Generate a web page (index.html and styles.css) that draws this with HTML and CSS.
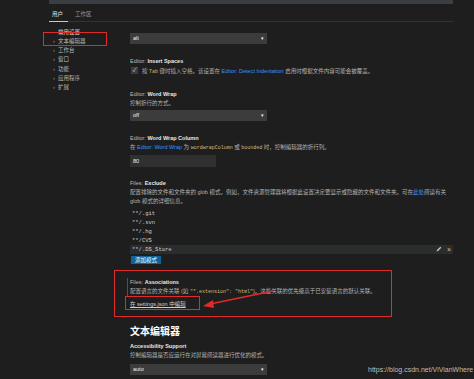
FILE: index.html
```html
<!DOCTYPE html>
<html lang="zh-CN">
<head>
    <meta charset="UTF-8">
    <title>设置</title>
    <link rel="stylesheet" href="styles.css">
</head>
<body>
    <div class="page">
        <div class="search"></div>
        <div class="tabs">
            <span class="tab active">用户</span>
            <span class="tab">工作区</span>
        </div>
        <div class="main">
            <ul class="toc">
                <li class="toc-top">常用设置</li>
                <li><span class="chev">›</span>文本编辑器</li>
                <li><span class="chev">›</span>工作台</li>
                <li><span class="chev">›</span>窗口</li>
                <li><span class="chev">›</span>功能</li>
                <li><span class="chev">›</span>应用程序</li>
                <li><span class="chev">›</span>扩展</li>
            </ul>

            <div class="content">
                <div class="select">alt<span class="arrow">▾</span></div>

                <div class="title gap-13">Editor: <b>Insert Spaces</b></div>
                <div class="check-row">
                    <span class="checkbox">✓</span>
                    <span>按 <code>Tab</code> 键时插入空格。该设置在 <a>Editor: Detect Indentation</a> 启用时根据文件内容可能会被覆盖。</span>
                </div>

                <div class="title gap-15">Editor: <b>Word Wrap</b></div>
                <div class="desc">控制折行的方式。</div>
                <div class="select gap-2">off<span class="arrow">▾</span></div>

                <div class="title gap-13">Editor: <b>Word Wrap Column</b></div>
                <div class="desc">在 <a>Editor: Word Wrap</a> 为 <code>wordwrapColumn</code> 或 <code>bounded</code> 时，控制编辑器的折行列。</div>
                <div class="input gap-2">80</div>

                <div class="title gap-12">Files: <b>Exclude</b></div>
                <div class="desc">配置排除的文件和文件夹的 glob 模式。例如，文件资源管理器将根据此设置决定要显示或隐藏的文件和文件夹。可在<a>此处</a>阅读有关<br>glob 模式的详细信息。</div>
                <ul class="patterns">
                    <li>**/.git</li>
                    <li>**/.svn</li>
                    <li>**/.hg</li>
                    <li>**/CVS</li>
                    <li class="hover">**/.DS_Store
                        <span class="row-icons">
                            <svg width="6" height="6" viewBox="0 0 6 6"><path d="M0.5 5.5 L1 4 L4.3 0.7 L5.3 1.7 L2 5 Z" fill="#c5c5c5"/></svg>
                            <span class="x">×</span>
                        </span>
                    </li>
                </ul>
                <div class="button">添加模式</div>

                <div class="modified">
                    <div class="title">Files: <b>Associations</b></div>
                    <div class="desc">配置语言的文件关联 (如 <code>"*.extension": "html"</code>)。这些关联的优先级高于已安装语言的默认关联。</div>
                </div>
                <div class="edit-link">在 settings.json 中编辑</div>

                <h2 class="heading">文本编辑器</h2>
                <div class="title gap-3">Accessibility Support</div>
                <div class="desc">控制编辑器是否应运行在对屏幕阅读器进行优化的模式。</div>
                <div class="select gap-4">auto<span class="arrow">▾</span></div>
            </div>
        </div>
    </div>

    <!-- annotations drawn over the screenshot -->
    <div class="mark mark-toc"></div>
    <div class="mark mark-assoc"></div>
    <div class="mark mark-link"></div>
    <svg class="arrow-mark" width="80" height="30" viewBox="0 0 80 30">
        <line x1="73" y1="4" x2="10" y2="17" stroke="#e22a2a" stroke-width="1.6"/>
        <polygon points="3,19 13,13 14,21" fill="#e22a2a"/>
    </svg>
    <div class="watermark">https://blog.csdn.net/ViVianWhere</div>
</body>
</html>
```

FILE: styles.css
```css
body {
    margin: 0;
    background: #1e1e1e;
    color: #cccccc;
    font-family: "Liberation Sans", "Noto Sans CJK SC", sans-serif;
    font-size: 5.5px;
    width: 474px;
    height: 379px;
    overflow: hidden;
    position: relative;
}

.page {
    margin-left: 49px;
    width: 404px;
}

.search {
    height: 4px;
    background: #3a3d41;
}

.tabs {
    display: flex;
    align-items: flex-end;
    gap: 4px;
    height: 17px;
    border-bottom: 1px solid #333333;
}

.tab {
    line-height: 9px;
    padding: 0 3px 2px;
    color: #9a9a9a;
}

.tab.active {
    color: #e7e7e7;
    margin-bottom: -1px;
    border-bottom: 1px solid #c8c8c8;
    padding-left: 3px;
    padding-right: 5px;
}

.main {
    display: flex;
}

.toc {
    list-style: none;
    margin: 0;
    padding: 5.5px 0 0 4px;
    width: 77px;
    color: #bdbdbd;
}

.toc li {
    line-height: 9.3px;
    white-space: nowrap;
}

.toc-top {
    padding-left: 5px;
    color: #d8d8d8;
}

.chev {
    display: inline-block;
    width: 5px;
    color: #a0a0a0;
}

.content {
    flex: 1;
    padding-top: 11px;
}

.select, .input {
    position: relative;
    width: 134px;
    height: 11px;
    line-height: 11px;
    padding-left: 3px;
    background: #3c3c3c;
    color: #f0f0f0;
}

.input {
    width: 83px;
    height: 12px;
    line-height: 12px;
    background: #303030;
}

.arrow {
    position: absolute;
    right: 3px;
    top: 0;
    font-size: 5px;
}

.title {
    line-height: 9px;
    color: #bbbbbb;
    white-space: nowrap;
}

.title b, .gap-3 {
    color: #e8e8e8;
    font-weight: bold;
}

.desc {
    line-height: 9px;
    color: #b4b4b4;
    white-space: nowrap;
}

a {
    color: #3794ff;
}

code {
    font-family: "Liberation Mono", monospace;
    font-size: 5px;
    color: #d7ba7d;
}

.gap-2 { margin-top: 2px; }
.gap-3 { margin-top: 3.5px; }
.gap-4 { margin-top: 4.5px; }
.gap-12 { margin-top: 12px; }
.gap-13 { margin-top: 13px; }
.gap-15 { margin-top: 15px; }

.check-row {
    display: flex;
    align-items: center;
    gap: 4px;
    height: 9px;
    padding-left: 1px;
    color: #b4b4b4;
    white-space: nowrap;
}

.checkbox {
    width: 7px;
    height: 7px;
    line-height: 7px;
    text-align: center;
    font-size: 6px;
    background: #3c3c3c;
    color: #c8c8c8;
}

.patterns {
    list-style: none;
    margin: 2.5px 0 0;
    padding: 0;
    font-family: "Liberation Mono", monospace;
    color: #cfcfcf;
}

.patterns li {
    position: relative;
    height: 9px;
    line-height: 9px;
    padding-left: 2px;
}

.patterns li.hover {
    background: #2a2d2e;
}

.row-icons {
    position: absolute;
    right: 2px;
    top: 0;
    display: flex;
    align-items: center;
    gap: 5px;
    height: 9px;
    font-family: "Liberation Sans", sans-serif;
    color: #c5c5c5;
}

.row-icons .x {
    font-size: 7px;
}

.button {
    display: inline-block;
    margin: 2.5px 0 0 1px;
    height: 8px;
    line-height: 8px;
    padding: 0 4px;
    background: #0e639c;
    color: #ffffff;
}

.modified {
    margin: 13.5px 0 0 -3px;
    padding-left: 2px;
    border-left: 1px solid #1f5f8f;
}

.edit-link {
    margin-top: 3.5px;
    line-height: 9px;
    color: #cfcfcf;
    text-decoration: underline;
}

.heading {
    margin: 17px 0 0;
    font-size: 10px;
    line-height: 12px;
    color: #ffffff;
}

.mark {
    position: absolute;
    border: 1.5px solid #e02b2b;
}

.mark-toc {
    left: 43px;
    top: 32px;
    width: 62px;
    height: 12px;
}

.mark-assoc {
    left: 114px;
    top: 270px;
    width: 276px;
    height: 45px;
}

.mark-link {
    left: 125px;
    top: 296px;
    width: 73px;
    height: 12px;
}

.arrow-mark {
    position: absolute;
    left: 200px;
    top: 287px;
}

.watermark {
    position: absolute;
    left: 368px;
    top: 366px;
    font-size: 7px;
    color: #bdbdbd;
    white-space: nowrap;
}
```
